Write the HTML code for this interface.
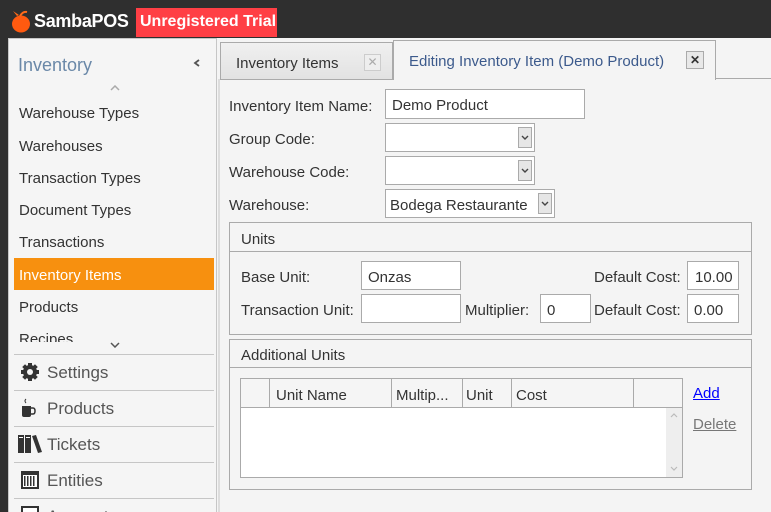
<!DOCTYPE html>
<html><head><style>
*{box-sizing:border-box;margin:0;padding:0}
html,body{width:771px;height:512px;overflow:hidden}
body{background:#2f2f2f;font-family:"Liberation Sans",sans-serif;font-size:15px;color:#333;position:relative}
.a{position:absolute;white-space:nowrap}
.inp{position:absolute;background:#fff;border:1px solid #aaa;padding-left:6px;padding-top:3px;font-size:15px;color:#333;display:flex;align-items:center}
.dd{position:absolute;right:2px;top:3px;bottom:3px;width:14px;background:#e6e6e6;border:1px solid #aaa;display:flex;align-items:center;justify-content:center}
.sep{position:absolute;left:14px;width:200px;height:1px;background:#c6c6c6}
.sec{position:absolute;left:47px;font-size:17px;color:#555}
.grp{position:absolute;border:1px solid #aaa}
.cl{position:absolute;top:0;height:29px;width:1px;background:#aaa}
</style></head><body>
<svg class="a" style="left:10px;top:9px" width="22" height="24" viewBox="0 0 22 24"><path d="M3 2 L9 6 L7 7Z" fill="#ff6a1a"/><ellipse cx="11" cy="15" rx="9" ry="8.5" fill="#ff5a10"/><path d="M10 7 Q13 2 17 3" stroke="#ff6a1a" stroke-width="2" fill="none"/></svg>
<div class="a" style="left:34px;top:11px;color:#fff;font-weight:bold;font-size:18px;letter-spacing:-0.3px">SambaPOS</div>
<div class="a" style="left:136px;top:8px;width:141px;height:29px;background:#ff3f45;color:#fff;font-weight:bold;font-size:16px;padding:5px 0 0 4px">Unregistered Trial</div>
<div class="a" style="left:217px;top:38px;width:554px;height:474px;background:#f4f4f4"></div>
<div class="a" style="left:8px;top:38px;width:209px;height:474px;background:#f5f5f5;border:1px solid #c6c6c6;border-bottom:none"></div>
<div class="a" style="left:18px;top:55px;font-size:18px;color:#6a88a8">Inventory</div>
<svg class="a" style="left:193px;top:59px" width="8" height="8"><path d="M6 1L2 4 6 7" stroke="#555" stroke-width="1.8" fill="none"/></svg>
<svg class="a" style="left:110px;top:85px" width="10" height="6"><path d="M1 5L5 1 9 5" stroke="#aaa" stroke-width="1.5" fill="none"/></svg>
<div class="a" style="left:19px;top:105px">Warehouse Types</div>
<div class="a" style="left:19px;top:138px">Warehouses</div>
<div class="a" style="left:19px;top:170px">Transaction Types</div>
<div class="a" style="left:19px;top:202px">Document Types</div>
<div class="a" style="left:19px;top:234px">Transactions</div>
<div class="a" style="left:14px;top:258px;width:200px;height:32px;background:#f7900f"></div>
<div class="a" style="left:19px;top:267px;color:#fff">Inventory Items</div>
<div class="a" style="left:19px;top:299px">Products</div>
<div class="a" style="left:14px;top:322px;width:200px;height:20px;overflow:hidden"><div class="a" style="left:5px;top:9px">Recipes</div></div>
<svg class="a" style="left:110px;top:342px" width="10" height="6"><path d="M1 1L5 5 9 1" stroke="#555" stroke-width="1.5" fill="none"/></svg>
<div class="sep" style="top:354px"></div>
<div class="sep" style="top:390px"></div>
<div class="sep" style="top:426px"></div>
<div class="sep" style="top:462px"></div>
<div class="sep" style="top:498px"></div>
<svg class="a" style="left:20px;top:362px" width="20" height="20" viewBox="0 0 20 20"><g fill="#333"><circle cx="10" cy="10" r="7"/><rect x="8" y="1" width="4" height="18"/><rect x="1" y="8" width="18" height="4"/><rect x="8" y="1" width="4" height="18" transform="rotate(45 10 10)"/><rect x="8" y="1" width="4" height="18" transform="rotate(-45 10 10)"/></g><circle cx="10" cy="10" r="3" fill="#f5f5f5"/></svg>
<div class="sec" style="top:363px">Settings</div>
<svg class="a" style="left:20px;top:398px" width="16" height="20" viewBox="0 0 16 20"><path d="M2 8h9v9q0 2-2 2H4q-2 0-2-2z" fill="#333"/><path d="M11 10h2q2 0 2 3t-2 3h-2" stroke="#333" stroke-width="1.5" fill="none"/><path d="M6 1q-2 2 0 4" stroke="#333" fill="none"/></svg>
<div class="sec" style="top:399px">Products</div>
<svg class="a" style="left:18px;top:434px" width="26" height="20" viewBox="0 0 26 20"><rect x="0" y="1" width="6" height="18" fill="#333"/><rect x="7" y="1" width="6" height="18" fill="#333"/><path d="M14 2l4-1 6 17-4 1z" fill="#333"/><rect x="1" y="3" width="4" height="1" fill="#fff"/><rect x="8" y="3" width="4" height="1" fill="#fff"/></svg>
<div class="sec" style="top:435px">Tickets</div>
<svg class="a" style="left:21px;top:471px" width="18" height="18" viewBox="0 0 18 18"><rect x="0" y="0" width="18" height="18" fill="#333"/><rect x="2" y="4" width="14" height="12" fill="#fff"/><g fill="#333"><rect x="3" y="5" width="1.5" height="10"/><rect x="6" y="5" width="1.5" height="10"/><rect x="9" y="5" width="1.5" height="10"/><rect x="12" y="5" width="1.5" height="10"/></g></svg>
<div class="sec" style="top:471px">Entities</div>
<svg class="a" style="left:21px;top:506px" width="18" height="6"><rect x="0" y="0" width="18" height="6" fill="#333"/><rect x="2" y="2" width="14" height="4" fill="#fff"/></svg>
<div class="sec" style="top:507px">Accounts</div>
<div class="a" style="left:220px;top:42px;width:173px;height:38px;background:linear-gradient(#f0f0f0,#e2e2e2);border:1px solid #aaa"></div>
<div class="a" style="left:236px;top:55px">Inventory Items</div>
<div class="a" style="left:364px;top:54px;width:17px;height:17px;border:1px solid #ccc;background:#eee;color:#aaa;font-size:12px;text-align:center;line-height:15px">✕</div>
<div class="a" style="left:716px;top:78px;width:55px;height:1px;background:#aaa"></div>
<div class="a" style="left:218px;top:79px;width:2px;height:433px;background:#ddd"></div>
<div class="a" style="left:393px;top:40px;width:323px;height:40px;background:#f4f4f4;border:1px solid #aaa;border-bottom:none"></div>
<div class="a" style="left:409px;top:53px;color:#3c5a8c">Editing Inventory Item (Demo Product)</div>
<div class="a" style="left:686px;top:51px;width:18px;height:18px;border:1px solid #aaa;background:#e8e8e8;color:#333;font-size:12px;font-weight:bold;text-align:center;line-height:16px">✕</div>
<div class="a" style="left:229px;top:98px">Inventory Item Name:</div>
<div class="inp" style="left:385px;top:89px;width:200px;height:30px">Demo Product</div>
<div class="a" style="left:229px;top:131px">Group Code:</div>
<div class="inp" style="left:385px;top:123px;width:150px;height:29px"><div class="dd"><svg width="8" height="5"><path d="M1 1L4 4 7 1" stroke="#444" stroke-width="1.4" fill="none"/></svg></div></div>
<div class="a" style="left:229px;top:164px">Warehouse Code:</div>
<div class="inp" style="left:385px;top:156px;width:150px;height:29px"><div class="dd"><svg width="8" height="5"><path d="M1 1L4 4 7 1" stroke="#444" stroke-width="1.4" fill="none"/></svg></div></div>
<div class="a" style="left:229px;top:197px">Warehouse:</div>
<div class="inp" style="left:385px;top:189px;width:170px;height:29px;padding-left:4px">Bodega Restaurante<div class="dd"><svg width="8" height="5"><path d="M1 1L4 4 7 1" stroke="#444" stroke-width="1.4" fill="none"/></svg></div></div>
<div class="grp" style="left:229px;top:222px;width:523px;height:113px"></div>
<div class="a" style="left:230px;top:251px;width:521px;height:1px;background:#aaa"></div>
<div class="a" style="left:241px;top:231px">Units</div>
<div class="a" style="left:241px;top:269px">Base Unit:</div>
<div class="inp" style="left:361px;top:261px;width:100px;height:29px">Onzas</div>
<div class="a" style="left:594px;top:269px">Default Cost:</div>
<div class="inp" style="left:687px;top:261px;width:52px;height:29px;padding-left:7px">10.00</div>
<div class="a" style="left:241px;top:302px">Transaction Unit:</div>
<div class="inp" style="left:361px;top:294px;width:100px;height:29px"></div>
<div class="a" style="left:465px;top:302px">Multiplier:</div>
<div class="inp" style="left:540px;top:294px;width:51px;height:29px">0</div>
<div class="a" style="left:594px;top:302px">Default Cost:</div>
<div class="inp" style="left:687px;top:294px;width:52px;height:29px">0.00</div>
<div class="grp" style="left:229px;top:339px;width:523px;height:151px"></div>
<div class="a" style="left:230px;top:367px;width:521px;height:1px;background:#aaa"></div>
<div class="a" style="left:241px;top:347px">Additional Units</div>
<div class="a" style="left:240px;top:378px;width:443px;height:100px;background:#fff;border:1px solid #aaa">
 <div class="a" style="left:0;top:0;width:441px;height:29px;background:#f5f5f5;border-bottom:1px solid #aaa"></div>
 <div class="cl" style="left:28px"></div><div class="cl" style="left:150px"></div><div class="cl" style="left:221px"></div><div class="cl" style="left:270px"></div><div class="cl" style="left:392px"></div>
 <div class="a" style="left:35px;top:8px">Unit Name</div>
 <div class="a" style="left:155px;top:8px">Multip...</div>
 <div class="a" style="left:225px;top:8px">Unit</div>
 <div class="a" style="left:275px;top:8px">Cost</div>
 <div class="a" style="left:425px;top:29px;width:16px;height:69px;background:#eee">
  <svg class="a" style="left:4px;top:5px" width="8" height="5"><path d="M1 4L4 1 7 4" stroke="#bbb" stroke-width="1.2" fill="none"/></svg>
  <svg class="a" style="left:4px;top:58px" width="8" height="5"><path d="M1 1L4 4 7 1" stroke="#bbb" stroke-width="1.2" fill="none"/></svg>
 </div>
</div>
<div class="a" style="left:693px;top:385px;color:#00f;text-decoration:underline">Add</div>
<div class="a" style="left:693px;top:416px;color:#777;text-decoration:underline">Delete</div>
</body></html>
